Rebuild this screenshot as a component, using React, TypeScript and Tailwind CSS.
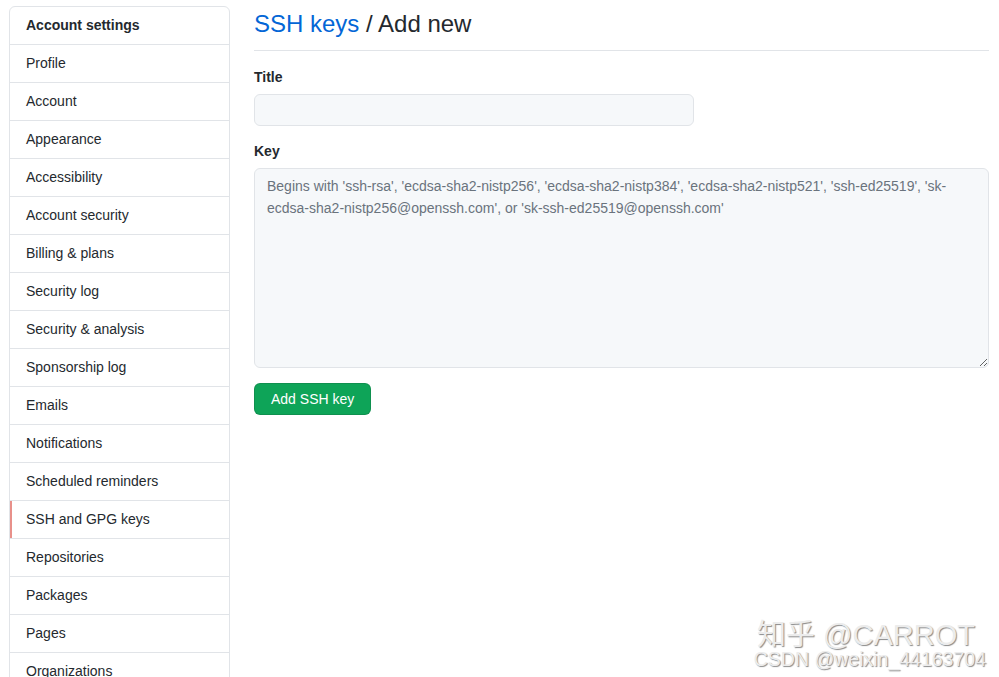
import React from "react";

const items = [
  "Profile",
  "Account",
  "Appearance",
  "Accessibility",
  "Account security",
  "Billing & plans",
  "Security log",
  "Security & analysis",
  "Sponsorship log",
  "Emails",
  "Notifications",
  "Scheduled reminders",
  "SSH and GPG keys",
  "Repositories",
  "Packages",
  "Pages",
  "Organizations",
];

export default function App() {
  return (
    <div
      className="relative h-[677px] overflow-hidden bg-white text-[#24292e] text-[14px] leading-[21px]"
      style={{ fontFamily: '"Liberation Sans", Arial, sans-serif' }}
    >
      <div className="flex gap-[24px] pl-[9px] pr-[10px] pt-[6px]">
        <nav className="w-[221px] shrink-0 rounded-t-[6px] border border-[#e1e4e8] bg-white">
          <div className="border-b border-[#e1e4e8] px-[16px] py-[8px] font-bold leading-[21px]">
            Account settings
          </div>
          {items.map((it) => {
            const active = it === "SSH and GPG keys";
            return (
              <div
                key={it}
                className={
                  active
                    ? "relative border-b border-[#e1e4e8] px-[16px] py-[8px] leading-[21px]"
                    : "border-b border-[#e1e4e8] px-[16px] py-[8px] leading-[21px]"
                }
              >
                {active && (
                  <span className="absolute left-0 top-0 bottom-0 w-[2px] bg-[#e8908a]" />
                )}
                {it}
              </div>
            );
          })}
        </nav>
        <main className="min-w-0 flex-1">
          <h2 className="border-b border-[#e1e4e8] pb-[8px] text-[24px] font-normal leading-[36px]">
            <a className="text-[#0366d6]">SSH keys</a> / Add new
          </h2>
          <div className="mt-[16px]">
            <label className="block font-bold leading-[21px]">Title</label>
            <input
              className="mt-[6px] block h-[32px] w-[440px] rounded-[6px] border border-[#e1e4e8] bg-[#f6f8fa] px-[12px] outline-none"
              type="text"
            />
          </div>
          <div className="mt-[15px]">
            <label className="block font-bold leading-[21px]">Key</label>
            <textarea
              className="mt-[6px] block h-[200px] w-full rounded-[6px] border border-[#e1e4e8] bg-[#f6f8fa] px-[12px] py-[6px] text-[14px] leading-[22px] outline-none placeholder:text-[#6a737d]"
              placeholder="Begins with 'ssh-rsa', 'ecdsa-sha2-nistp256', 'ecdsa-sha2-nistp384', 'ecdsa-sha2-nistp521', 'ssh-ed25519', 'sk-ecdsa-sha2-nistp256@openssh.com', or 'sk-ssh-ed25519@openssh.com'"
            />
          </div>
          <button className="mt-[15px] h-[32px] rounded-[6px] border border-[rgba(27,31,35,0.15)] bg-[#0ea458] px-[16px] text-[14px] text-white">
            Add SSH key
          </button>
        </main>
      </div>
      <div className="pointer-events-none absolute right-[14px] bottom-[8px] flex flex-col items-end leading-none text-[#ececec] [text-shadow:1px_1px_1px_#8a8a8a]">
        <div
          className="mr-[10px] text-[29px] leading-[28px]"
          style={{ fontFamily: '"Liberation Sans", "Noto Sans CJK SC", sans-serif' }}
        >
          知乎 @CARROT
        </div>
        <div className="mr-[-1px] text-[19.5px] leading-[20px]">CSDN @weixin_44163704</div>
      </div>
    </div>
  );
}
